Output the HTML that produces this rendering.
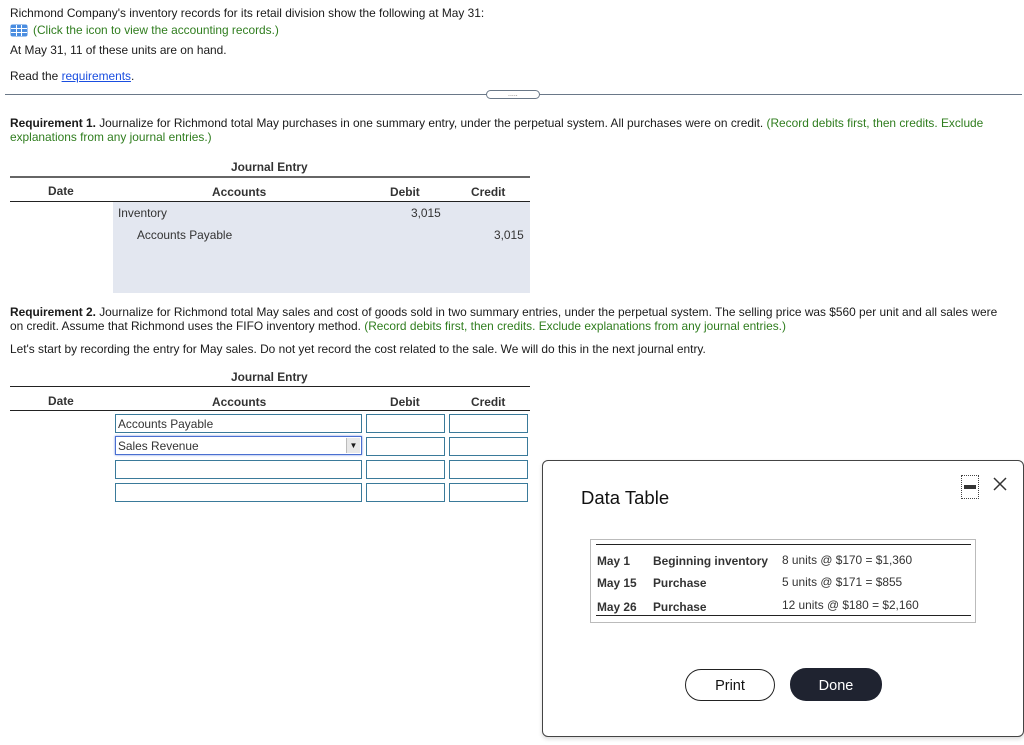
<!DOCTYPE html>
<html><head><style>
*{margin:0;padding:0;box-sizing:border-box}
body{width:1024px;height:745px;background:#fff;font-family:"Liberation Sans",Arial,sans-serif;font-size:11.9px;color:#1a1a1a;position:relative;overflow:hidden}
.a{position:absolute;white-space:nowrap;line-height:14px}
.g{color:#2f7d1e}
.b{font-weight:bold}
.hl{position:absolute;height:0;border-top:1px solid #222}
.inp{position:absolute;height:19px;border:1px solid #3a7a9a;background:#fff}
</style></head><body>
<div class="a" style="left:10px;top:6px">Richmond Company's inventory records for its retail division show the following at May 31:</div>
<svg style="position:absolute;left:10px;top:24px" width="18" height="13" viewBox="0 0 18 13"><rect x="0.5" y="0.5" width="17" height="12" rx="2" fill="#4a8de0"/><g stroke="#fff" stroke-width="1"><line x1="1" y1="4.5" x2="17" y2="4.5"/><line x1="1" y1="8.5" x2="17" y2="8.5"/><line x1="6.5" y1="1" x2="6.5" y2="12"/><line x1="11.5" y1="1" x2="11.5" y2="12"/></g></svg>
<div class="a g" style="left:33px;top:23px">(Click the icon to view the accounting records.)</div>
<div class="a" style="left:10px;top:43px">At May 31, 11 of these units are on hand.</div>
<div class="a" style="left:10px;top:69px">Read the <span style="color:#1a4ee0;text-decoration:underline">requirements</span>.</div>
<div style="position:absolute;left:5px;top:94px;width:1017px;height:1px;background:#6a7888"></div>
<div style="position:absolute;left:486px;top:90px;width:54px;height:9px;border:1px solid #6a7888;border-radius:5px;background:#fff"></div>
<div class="a" style="left:508px;top:88px;font-size:7px;color:#666">.....</div>

<div class="a" style="left:10px;top:116px"><span class="b">Requirement 1.</span> Journalize for Richmond total May purchases in one summary entry, under the perpetual system. All purchases were on credit. <span class="g">(Record debits first, then credits. Exclude</span></div>
<div class="a g" style="left:10px;top:130px">explanations from any journal entries.)</div>

<div class="a b" style="left:231px;top:160px;color:#333">Journal Entry</div>
<div style="position:absolute;left:10px;top:176px;width:520px;height:2px;background:#666"></div>
<div class="a b" style="left:48px;top:184px;color:#333">Date</div>
<div class="a b" style="left:212px;top:185px;color:#333">Accounts</div>
<div class="a b" style="left:390px;top:185px;color:#333">Debit</div>
<div class="a b" style="left:471px;top:185px;color:#333">Credit</div>
<div class="hl" style="left:10px;top:201px;width:520px"></div>
<div style="position:absolute;left:113px;top:202px;width:417px;height:91px;background:#e3e7f0"></div>
<div class="a" style="left:118px;top:206px;color:#333">Inventory</div>
<div class="a" style="left:137px;top:228px;color:#333">Accounts Payable</div>
<div class="a" style="left:411px;top:206px;color:#333">3,015</div>
<div class="a" style="left:494px;top:228px;color:#333">3,015</div>

<div class="a" style="left:10px;top:305px"><span class="b">Requirement 2.</span> Journalize for Richmond total May sales and cost of goods sold in two summary entries, under the perpetual system. The selling price was $560 per unit and all sales were</div>
<div class="a" style="left:10px;top:319px">on credit. Assume that Richmond uses the FIFO inventory method. <span class="g">(Record debits first, then credits. Exclude explanations from any journal entries.)</span></div>
<div class="a" style="left:10px;top:342px">Let's start by recording the entry for May sales. Do not yet record the cost related to the sale. We will do this in the next journal entry.</div>

<div class="a b" style="left:231px;top:370px;color:#333">Journal Entry</div>
<div style="position:absolute;left:10px;top:386px;width:520px;height:1px;background:#222"></div>
<div class="a b" style="left:48px;top:394px;color:#333">Date</div>
<div class="a b" style="left:212px;top:395px;color:#333">Accounts</div>
<div class="a b" style="left:390px;top:395px;color:#333">Debit</div>
<div class="a b" style="left:471px;top:395px;color:#333">Credit</div>
<div class="hl" style="left:10px;top:410px;width:520px"></div>

<div class="inp" style="left:115px;top:414px;width:247px"><span class="a" style="left:2px;top:2px;color:#333">Accounts Payable</span></div>
<div class="inp" style="left:366px;top:414px;width:79px"></div>
<div class="inp" style="left:449px;top:414px;width:79px"></div>
<div class="inp" style="left:115px;top:436px;width:247px;border:1px solid #4a6fd0;box-shadow:0 0 2px #6a8ae0"><span class="a" style="left:2px;top:2px;color:#333">Sales Revenue</span><span style="position:absolute;right:1px;top:1px;width:14px;height:15px;background:#e8e8e8;border-left:1px solid #bbb;font-size:8px;text-align:center;line-height:15px">▼</span></div>
<div class="inp" style="left:366px;top:437px;width:79px"></div>
<div class="inp" style="left:449px;top:437px;width:79px"></div>
<div class="inp" style="left:115px;top:460px;width:247px"></div>
<div class="inp" style="left:366px;top:460px;width:79px"></div>
<div class="inp" style="left:449px;top:460px;width:79px"></div>
<div class="inp" style="left:115px;top:483px;width:247px"></div>
<div class="inp" style="left:366px;top:483px;width:79px"></div>
<div class="inp" style="left:449px;top:483px;width:79px"></div>

<div style="position:absolute;left:542px;top:460px;width:482px;height:277px;border:1px solid #444;border-radius:6px;background:#fff;box-shadow:0 2px 4px rgba(0,0,0,.15)"></div>
<div class="a" style="left:581px;top:488px;font-size:18.5px;line-height:20px;color:#111">Data Table</div>
<div style="position:absolute;left:961px;top:475px;width:18px;height:24px;border:1px dotted #444"></div>
<div style="position:absolute;left:964px;top:485px;width:12px;height:4px;background:#333"></div>
<svg style="position:absolute;left:992px;top:477px" width="16" height="14"><path d="M2 1L14 13M14 1L2 13" stroke="#333" stroke-width="1.5"/></svg>
<div style="position:absolute;left:590px;top:539px;width:386px;height:84px;border:1px solid #bbb"></div>
<div class="hl" style="left:596px;top:544px;width:375px"></div>
<div class="hl" style="left:596px;top:615px;width:375px"></div>
<div class="a b" style="left:597px;top:554px;color:#333">May 1</div>
<div class="a b" style="left:653px;top:554px;color:#333">Beginning inventory</div>
<div class="a" style="left:782px;top:553px;color:#333">8 units @ $170 = $1,360</div>
<div class="a b" style="left:597px;top:576px;color:#333">May 15</div>
<div class="a b" style="left:653px;top:576px;color:#333">Purchase</div>
<div class="a" style="left:782px;top:575px;color:#333">5 units @ $171 = $855</div>
<div class="a b" style="left:597px;top:600px;color:#333">May 26</div>
<div class="a b" style="left:653px;top:600px;color:#333">Purchase</div>
<div class="a" style="left:782px;top:598px;color:#333">12 units @ $180 = $2,160</div>
<div style="position:absolute;left:685px;top:669px;width:90px;height:32px;border:1.5px solid #222;border-radius:16px;text-align:center;line-height:33px;font-size:14.5px;color:#111">Print</div>
<div style="position:absolute;left:790px;top:668px;width:92px;height:33px;background:#1f2330;border-radius:16px;text-align:center;line-height:37px;font-size:14.5px;color:#fff">Done</div>
</body></html>
